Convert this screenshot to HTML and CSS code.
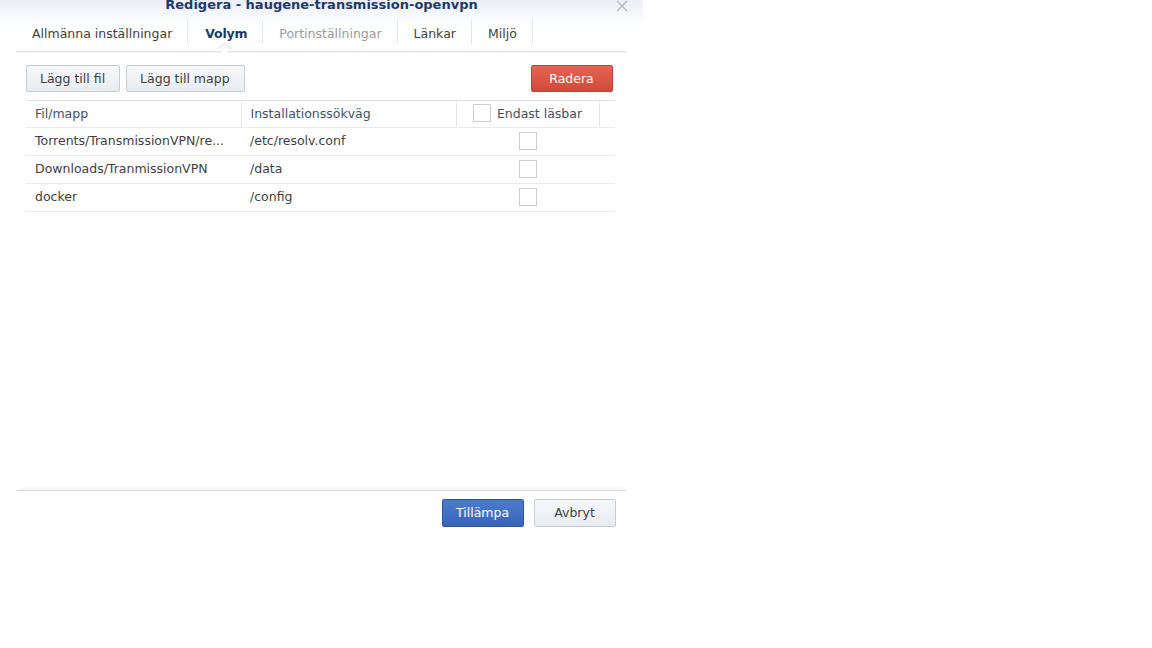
FILE: index.html
```html
<!DOCTYPE html>
<html lang="sv">
<head>
    <meta charset="UTF-8">
    <title>Redigera - haugene-transmission-openvpn</title>
    <link rel="stylesheet" href="styles.css">
</head>
<body>
    <div class="dialog">
        <div class="dlg-head">
            <span class="dlg-title">Redigera - haugene-transmission-openvpn</span>
            <span class="dlg-close">
                <svg width="12" height="12" viewBox="0 0 12 12"><path d="M1 1L11 11M11 1L1 11" stroke="#b4b8bf" stroke-width="1.4"/></svg>
            </span>
        </div>
        <ul class="tabs">
            <li>Allmänna inställningar</li>
            <li class="active">Volym</li>
            <li class="off">Portinställningar</li>
            <li>Länkar</li>
            <li>Miljö</li>
        </ul>

        <div class="body">
            <div class="toolbar">
                <a class="btn">Lägg till fil</a>
                <a class="btn">Lägg till mapp</a>
                <span class="spacer"></span>
                <a class="btn btn-red">Radera</a>
            </div>

            <table class="grid">
                <colgroup>
                    <col class="w1"><col class="w2"><col class="w3"><col class="w4">
                </colgroup>
                <tr class="hd">
                    <th>Fil/mapp</th>
                    <th>Installationssökväg</th>
                    <th class="mid"><span class="chk"></span>Endast läsbar</th>
                    <th class="last"></th>
                </tr>
                <tr>
                    <td>Torrents/TransmissionVPN/re...</td>
                    <td>/etc/resolv.conf</td>
                    <td class="mid"><span class="chk"></span></td>
                    <td></td>
                </tr>
                <tr>
                    <td>Downloads/TranmissionVPN</td>
                    <td>/data</td>
                    <td class="mid"><span class="chk"></span></td>
                    <td></td>
                </tr>
                <tr>
                    <td>docker</td>
                    <td>/config</td>
                    <td class="mid"><span class="chk"></span></td>
                    <td></td>
                </tr>
            </table>
        </div>

        <div class="foot">
            <a class="btn btn-blue">Tillämpa</a>
            <a class="btn btn-w">Avbryt</a>
        </div>
    </div>
</body>
</html>
```

FILE: styles.css
```css
body, ul, li, table, th, td { margin: 0; padding: 0; }
body {
    font: 12px/1.5 "DejaVu Sans", Verdana, sans-serif;
    color: #404040;
    background: #fff;
}

.dialog {
    width: 643px;
    height: 648px;
    background: linear-gradient(#eaeef5 0, #fff 26px);
}

.dlg-head {
    height: 15px;
    display: flex;
    justify-content: center;
    position: relative;
}
.dlg-title {
    margin-top: -5px;
    font-weight: bold;
    font-size: 13px;
    line-height: 20px;
    color: #1d3969;
}
.dlg-close {
    position: absolute;
    right: 15px;
    top: -1px;
}

.tabs {
    list-style: none;
    display: flex;
    margin: 0 17px 0 16px;
    height: 36px;
    border-bottom: 1px solid #dde1e6;
    box-shadow: 0 1px 0 #f3f4f6;
}
.tabs li {
    position: relative;
    padding: 0 16px;
    line-height: 37px;
    color: #3e3e3e;
    font-size: 12.5px;
}
.tabs li:after {
    content: "";
    position: absolute;
    right: 0;
    top: 5px;
    height: 24px;
    border-right: 1px solid #e3e5e8;
}
.tabs li.active {
    font-weight: bold;
    color: #1d3969;
    padding: 0 16px 0 17px;
    letter-spacing: -0.2px;
}
.tabs li.active:before {
    content: "";
    position: absolute;
    left: 50%;
    bottom: -2px;
    margin-left: -6px;
    width: 8px;
    height: 8px;
    background: #fff;
    border-left: 1px solid #dde1e6;
    border-top: 1px solid #dde1e6;
    transform: rotate(45deg);
}
.tabs li.off { color: #9a9a9a; }

.body {
    height: 438px;
    padding: 0 28px 0 26px;
}
.toolbar {
    display: flex;
    gap: 6px;
    padding-top: 13px;
    height: 26px;
    margin-bottom: 9px;
    padding-right: 2px;
}
.spacer { flex: 1; }

.btn {
    display: inline-block;
    box-sizing: border-box;
    height: 27px;
    line-height: 25px;
    padding: 0 14px 0 13px;
    border: 1px solid #c6ccd4;
    border-radius: 2px;
    background: linear-gradient(#f6f8fb, #e8ecf1);
    color: #404040;
    font-size: 12.5px;
    text-align: center;
}
.btn-red {
    width: 82px;
    color: #fff;
    border-color: #bd4135;
    background: linear-gradient(#e46655, #d2483a);
}
.btn-blue, .btn-w {
    width: 82px;
    height: 28px;
    line-height: 26px;
}
.btn-blue {
    color: #fff;
    border-color: #2c56a2;
    background: linear-gradient(#4b7bcf, #3764b8);
}

.grid {
    width: 589px;
    table-layout: fixed;
    border-collapse: collapse;
    border-top: 1px solid #dfe3e8;
}
.grid .w1 { width: 215px; }
.grid .w2 { width: 215px; }
.grid .w3 { width: 143px; }
.grid .w4 { width: 16px; }
.grid th, .grid td {
    height: 27px;
    padding: 0 9px;
    text-align: left;
    border-bottom: 1px solid #e8ebee;
    font-weight: normal;
    white-space: nowrap;
    overflow: hidden;
    font-size: 12.5px;
}
.grid th {
    height: 26px;
    color: #3e4f66;
    border-right: 1px solid #e3e7ec;
}
.grid th.last { border-right: 0; }
.grid .mid { text-align: center; padding: 0; }
.grid th.mid .chk { margin-right: 6px; }

.chk {
    display: inline-block;
    width: 18px;
    height: 18px;
    box-sizing: border-box;
    border: 1px solid #c9cdd2;
    background: #fff;
    vertical-align: middle;
    margin-top: -2px;
}

.foot {
    margin: 0 17px 0 16px;
    border-top: 1px solid #d9dbde;
    box-shadow: 0 -3px 4px -2px #eeeeee;
    display: flex;
    justify-content: flex-end;
    gap: 10px;
    padding: 8px 10px 0 0;
}
```
